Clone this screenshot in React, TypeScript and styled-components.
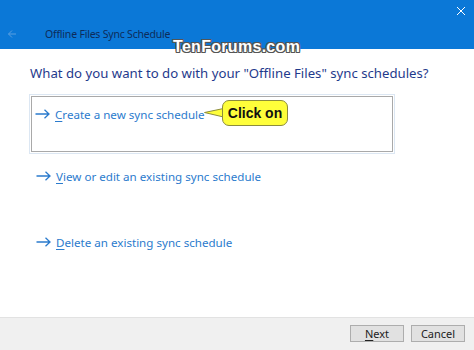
import React, { FC } from 'react';
import styled, { createGlobalStyle } from 'styled-components';

const GlobalStyle = createGlobalStyle`
    html, body {
        margin: 0;
        padding: 0;
        background: #ffffff;
    }
    body {
        font-family: "Noto Sans", "Open Sans", "Liberation Sans", sans-serif;
    }
`;

const Window = styled.div`
    position: relative;
    width: 474px;
    height: 350px;
    display: flex;
    flex-direction: column;
    background: #ffffff;
    overflow: hidden;
`;

const TitleBar = styled.div`
    height: 49px;
    background: #0b78d7;
    position: relative;
`;

const BackButton = styled.span`
    position: absolute;
    left: 7px;
    top: 29px;
    width: 10px;
    height: 10px;
    display: flex;
`;

const Title = styled.span`
    position: absolute;
    left: 45px;
    top: 27px;
    font-size: 10.5px;
    color: #0d2c5a;
    letter-spacing: -0.2px;
`;

const CloseButton = styled.span`
    position: absolute;
    right: 8px;
    top: 6px;
    width: 10px;
    height: 10px;
    display: flex;
`;

const Watermark = styled.div`
    position: absolute;
    left: 173px;
    top: 38px;
    font-family: "Liberation Sans", Arial, sans-serif;
    font-weight: bold;
    font-size: 16px;
    letter-spacing: 0.3px;
    color: #ffffff;
    text-shadow:
        -1px -1px 0 #555, 1px -1px 0 #555, -1px 1px 0 #555, 1px 1px 0 #555,
        0 1px 0 #555, 0 -1px 0 #555, 1px 0 0 #555, -1px 0 0 #555;
`;

const Content = styled.div`
    flex: 1;
    padding: 14px 0 0 30px;
    display: flex;
    flex-direction: column;
`;

const Question = styled.div`
    font-size: 13.2px;
    color: #1f3a8c;
    height: 20px;
    line-height: 20px;
    white-space: nowrap;
`;

const OptionBox = styled.div<{ $selected?: boolean }>`
    box-sizing: border-box;
    width: 362px;
    height: ${p => (p.$selected ? '56px' : 'auto')};
    margin-left: 1px;
    padding: ${p => (p.$selected ? '7px 0 0 3px' : '0 0 0 4px')};
    border: 1px solid ${p => (p.$selected ? '#a9a9a9' : 'transparent')};
    outline: ${p => (p.$selected ? '1px solid #dce7f3' : 'none')};
    outline-offset: 1px;
    margin-top: ${p => (p.$selected ? '13px' : '0')};
`;

const Spacer = styled.div<{ $h: number }>`
    height: ${p => p.$h}px;
`;

const OptionLink = styled.div`
    display: flex;
    align-items: center;
    gap: 5px;
    height: 20px;
    font-size: 11.6px;
    color: #2b7bcd;
    position: relative;
    white-space: nowrap;
`;

const AccessKey = styled.span`
    text-decoration: underline;
    text-underline-offset: 2px;
`;

const Callout = styled.div`
    position: absolute;
    left: 187px;
    top: -4px;
    width: 66px;
    height: 26px;
    display: flex;
    align-items: center;
    justify-content: center;
    background: #fefe3a;
    border: 1px solid #8c8c3c;
    border-radius: 7px;
    font-family: "Liberation Sans", Arial, sans-serif;
    font-weight: bold;
    font-size: 14px;
    color: #111111;
    box-sizing: border-box;
`;

const CalloutTail = styled.svg`
    position: absolute;
    left: 169px;
    top: 4px;
`;

const Footer = styled.div`
    height: 33px;
    background: #f0f0f0;
    border-top: 1px solid #e2e2e2;
    box-sizing: border-box;
    display: flex;
    justify-content: flex-end;
    align-items: flex-start;
    padding: 7px 9px 0 0;
    gap: 7px;
`;

const Button = styled.button`
    width: 54px;
    height: 17px;
    padding: 0;
    background: #e1e1e1;
    border: 1px solid #adadad;
    font-family: "Noto Sans", "Open Sans", sans-serif;
    font-size: 11px;
    line-height: 14px;
    color: #222222;
`;

const Arrow: FC = () => (
    <svg width="15" height="10" viewBox="0 0 15 10">
        <path d="M0.5 5 H14 M9.5 0.8 L14 5 L9.5 9.2" fill="none" stroke="#2b7bcd" strokeWidth="1.3" />
    </svg>
);

const Option: FC<{ k: string; rest: string; children?: React.ReactNode }> = ({ k, rest, children }) => (
    <OptionLink>
        <Arrow />
        <span>
            <AccessKey>{k}</AccessKey>
            {rest}
        </span>
        {children}
    </OptionLink>
);

const App: FC = () => {
    return (
        <Window>
            <GlobalStyle />
            <TitleBar>
                <BackButton>
                    <svg width="10" height="10" viewBox="0 0 10 10">
                        <path d="M9 5 H1.5 M5 1.5 L1.5 5 L5 8.5" fill="none" stroke="#5a9fe0" strokeWidth="1" />
                    </svg>
                </BackButton>
                <Title>Offline Files Sync Schedule</Title>
                <CloseButton>
                    <svg width="10" height="10" viewBox="0 0 10 10">
                        <path d="M1 1 L9 9 M9 1 L1 9" stroke="#ffffff" strokeWidth="1" />
                    </svg>
                </CloseButton>
            </TitleBar>
            <Watermark>TenForums.com</Watermark>
            <Content>
                <Question>What do you want to do with your "Offline Files" sync schedules?</Question>
                <OptionBox $selected>
                    <Option k="C" rest="reate a new sync schedule">
                        <CalloutTail width="20" height="10" viewBox="0 0 20 10">
                            <path d="M0.5 4.5 L19.5 0.5 L19.5 9 Z" fill="#fefe3a" stroke="#8c8c3c" strokeWidth="1" />
                        </CalloutTail>
                        <Callout>Click on</Callout>
                    </Option>
                </OptionBox>
                <Spacer $h={13} />
                <OptionBox>
                    <Option k="V" rest="iew or edit an existing sync schedule" />
                </OptionBox>
                <Spacer $h={44} />
                <OptionBox>
                    <Option k="D" rest="elete an existing sync schedule" />
                </OptionBox>
            </Content>
            <Footer>
                <Button>
                    <AccessKey>N</AccessKey>ext
                </Button>
                <Button>Cancel</Button>
            </Footer>
        </Window>
    );
};

export default App;
